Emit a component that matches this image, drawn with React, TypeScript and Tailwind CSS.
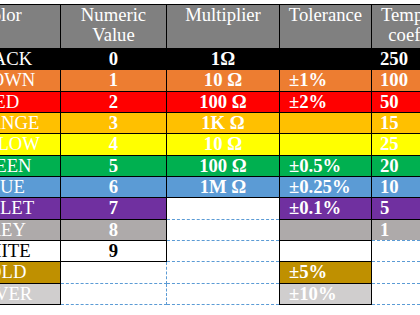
import React from "react";

type Cell = { t?: string; cls: string };

const S = "border border-solid border-black";
const D = "border border-dashed border-[#5b9bd5]";

const rows: Cell[][] = [
  [
    { t: "BLACK", cls: `${S} bg-black text-white font-normal text-center` },
    { t: "0", cls: `${S} bg-black text-white text-center` },
    { t: "1Ω", cls: `${S} bg-black text-white text-center` },
    { t: "", cls: `${S} bg-black text-white pl-[9px]` },
    { t: "250", cls: `${S} bg-black text-white pl-[8px]` },
  ],
  [
    { t: "BROWN", cls: `${S} bg-[#ed7d31] text-white font-normal text-center` },
    { t: "1", cls: `${S} bg-[#ed7d31] text-white text-center` },
    { t: "10 Ω", cls: `${S} bg-[#ed7d31] text-white text-center` },
    { t: "±1%", cls: `${S} bg-[#ed7d31] text-white pl-[9px]` },
    { t: "100", cls: `${S} bg-[#ed7d31] text-white pl-[8px]` },
  ],
  [
    { t: "RED", cls: `${S} bg-[#ff0000] text-white font-normal text-center` },
    { t: "2", cls: `${S} bg-[#ff0000] text-white text-center` },
    { t: "100 Ω", cls: `${S} bg-[#ff0000] text-white text-center` },
    { t: "±2%", cls: `${S} bg-[#ff0000] text-white pl-[9px]` },
    { t: "50", cls: `${S} bg-[#ff0000] text-white pl-[8px]` },
  ],
  [
    { t: "ORANGE", cls: `${S} bg-[#ffc000] text-white font-normal text-center` },
    { t: "3", cls: `${S} bg-[#ffc000] text-white text-center` },
    { t: "1K Ω", cls: `${S} bg-[#ffc000] text-white text-center` },
    { t: "", cls: `${S} bg-[#ffc000] text-white pl-[9px]` },
    { t: "15", cls: `${S} bg-[#ffc000] text-white pl-[8px]` },
  ],
  [
    { t: "YELLOW", cls: `${S} bg-[#ffff00] text-white font-normal text-center` },
    { t: "4", cls: `${S} bg-[#ffff00] text-white text-center` },
    { t: "10 Ω", cls: `${S} bg-[#ffff00] text-white text-center` },
    { t: "", cls: `${S} bg-[#ffff00] text-white pl-[9px]` },
    { t: "25", cls: `${S} bg-[#ffff00] text-white pl-[8px]` },
  ],
  [
    { t: "GREEN", cls: `${S} bg-[#00b050] text-white font-normal text-center` },
    { t: "5", cls: `${S} bg-[#00b050] text-white text-center` },
    { t: "100 Ω", cls: `${S} bg-[#00b050] text-white text-center` },
    { t: "±0.5%", cls: `${S} bg-[#00b050] text-white pl-[9px]` },
    { t: "20", cls: `${S} bg-[#00b050] text-white pl-[8px]` },
  ],
  [
    { t: "BLUE", cls: `${S} bg-[#5b9bd5] text-white font-normal text-center` },
    { t: "6", cls: `${S} bg-[#5b9bd5] text-white text-center` },
    { t: "1M Ω", cls: `${S} bg-[#5b9bd5] text-white text-center` },
    { t: "±0.25%", cls: `${S} bg-[#5b9bd5] text-white pl-[9px]` },
    { t: "10", cls: `${S} bg-[#5b9bd5] text-white pl-[8px]` },
  ],
  [
    { t: "VIOLET", cls: `${S} bg-[#7030a0] text-white font-normal text-center` },
    { t: "7", cls: `${S} bg-[#7030a0] text-white text-center` },
    { t: "", cls: `${D} bg-white` },
    { t: "±0.1%", cls: `${S} bg-[#7030a0] text-white pl-[9px]` },
    { t: "5", cls: `${S} bg-[#7030a0] text-white pl-[8px]` },
  ],
  [
    { t: "GREY", cls: `${S} bg-[#aeaaaa] text-white font-normal text-center` },
    { t: "8", cls: `${S} bg-[#aeaaaa] text-white text-center` },
    { t: "", cls: `${D} bg-white` },
    { t: "", cls: `${S} bg-[#aeaaaa] text-white pl-[9px]` },
    { t: "1", cls: `${D} bg-[#aeaaaa] text-white pl-[8px]` },
  ],
  [
    { t: "WHITE", cls: `${S} bg-white text-black font-normal text-center` },
    { t: "9", cls: `${S} bg-white text-black text-center` },
    { t: "", cls: `${D} bg-white` },
    { t: "", cls: `${S} bg-white pl-[9px]` },
    { t: "", cls: `${D} bg-white` },
  ],
  [
    { t: "GOLD", cls: `${S} bg-[#bf9000] text-white font-normal text-center` },
    { t: "", cls: `${D} bg-white` },
    { t: "", cls: `${D} bg-white` },
    { t: "±5%", cls: `${S} bg-[#bf9000] text-white pl-[9px]` },
    { t: "", cls: `${D} bg-white` },
  ],
  [
    { t: "SILVER", cls: `${S} bg-[#d0cece] text-white font-normal text-center` },
    { t: "", cls: `${D} bg-white` },
    { t: "", cls: `${D} bg-white` },
    { t: "±10%", cls: `${S} bg-[#d0cece] text-white pl-[9px]` },
    { t: "", cls: `${D} bg-white` },
  ],
];

export default function App() {
  return (
    <div className="w-[420px] h-[315px] overflow-hidden bg-white font-['Liberation_Serif',serif] text-[18.67px]">
      <table className="border-collapse table-fixed ml-[-60px] mt-[4px] w-[544px]">
        <colgroup>
          <col className="w-[120px]" />
          <col className="w-[106px]" />
          <col className="w-[113px]" />
          <col className="w-[92px]" />
          <col className="w-[113px]" />
        </colgroup>
        <thead>
          <tr>
            <th className={`${S} bg-[#808080] text-white font-normal text-center align-top p-0 pb-[3px] leading-[20px]`}>Color</th>
            <th className={`${S} bg-[#808080] text-white font-normal text-center align-top p-0 pb-[3px] leading-[20px]`}>
              Numeric
              <br />
              Value
            </th>
            <th className={`${S} bg-[#808080] text-white font-normal text-center align-top p-0 pb-[3px] leading-[20px]`}>Multiplier</th>
            <th className={`${S} bg-[#808080] text-white font-normal text-center align-top p-0 pb-[3px] leading-[20px]`}>Tolerance</th>
            <th className={`${S} bg-[#808080] text-white font-normal text-center align-top p-0 pb-[3px] leading-[20px] whitespace-nowrap`}>
              Temperature
              <br />
              coefficient
            </th>
          </tr>
        </thead>
        <tbody>
          {rows.map((r, i) => (
            <tr key={i}>
              {r.map((c, j) => (
                <td
                  key={j}
                  className={`${c.cls} font-bold h-[21.33px] p-0 leading-[20px] align-middle whitespace-nowrap ${j === 0 ? "!font-normal" : ""}`}
                >
                  {c.t}
                </td>
              ))}
            </tr>
          ))}
        </tbody>
      </table>
    </div>
  );
}
